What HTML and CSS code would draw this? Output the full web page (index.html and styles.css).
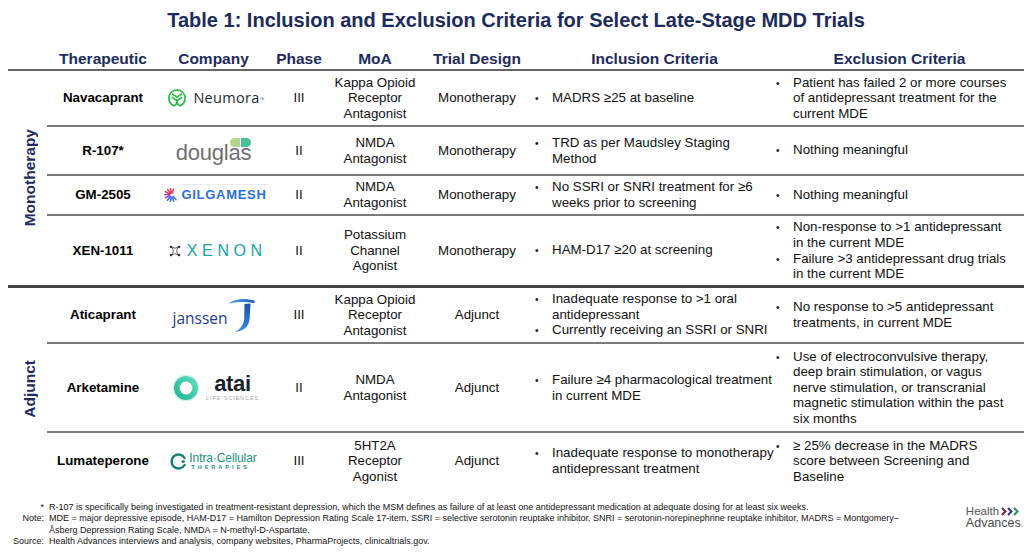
FILE: index.html
```html
<!DOCTYPE html>
<html lang="en">
<head>
<meta charset="utf-8">
<title>Table 1: Inclusion and Exclusion Criteria</title>
<link rel="stylesheet" href="styles.css">
</head>
<body>
<div class="page">
  <h1 class="title">Table 1: Inclusion and Exclusion Criteria for Select Late-Stage MDD Trials</h1>

  <div class="tbl">
    <div class="head">
      <div></div>
      <div>Therapeutic</div>
      <div>Company</div>
      <div>Phase</div>
      <div>MoA</div>
      <div>Trial Design</div>
      <div>Inclusion Criteria</div>
      <div>Exclusion Criteria</div>
    </div>

    <section class="group mono">
      <div class="side"><span>Monotherapy</span></div>
      <div class="rows">
        <div class="row h56 line">
          <div class="name">Navacaprant</div>
          <div class="co">
            <span class="neumora">
              <svg class="neu-icon" width="18" height="18" viewBox="0 0 20 20" aria-hidden="true">
                <path d="M6.5 18.5 C2.5 17 1 13.5 1 10 C1 5 5 1 10 1 C15 1 19 5 19 10 C19 13.5 17.5 17 13.5 18.5" fill="none" stroke="#33b84b" stroke-width="1.9" stroke-linecap="round"/>
                <path d="M5 5.5 L10 9 L15 5.5" fill="none" stroke="#33b84b" stroke-width="1.9" stroke-linecap="round" stroke-linejoin="round"/>
                <path d="M5 9.5 L10 13 L15 9.5" fill="none" stroke="#33b84b" stroke-width="1.9" stroke-linecap="round" stroke-linejoin="round"/>
                <path d="M6.5 18.5 C8.5 18 10 16 10 13 C10 16 11.5 18 13.5 18.5" fill="none" stroke="#33b84b" stroke-width="1.9" stroke-linecap="round"/>
              </svg>
              <span class="neu-text">Neumora</span><span class="tm">™</span>
            </span>
          </div>
          <div>III</div>
          <div>Kappa Opioid<br>Receptor<br>Antagonist</div>
          <div>Monotherapy</div>
          <ul class="crit"><li><span>MADRS ≥25 at baseline</span></li></ul>
          <ul class="crit"><li><span>Patient has failed 2 or more courses<br>of antidepressant treatment for the<br>current MDE</span></li></ul>
        </div>

        <div class="row h49 line">
          <div class="name">R-107*</div>
          <div class="co">
            <span class="douglas">
              <span class="pill"><span class="pill-l"></span><span class="pill-r"></span></span>
              <span class="dg-text">douglas</span>
            </span>
          </div>
          <div>II</div>
          <div>NMDA<br>Antagonist</div>
          <div>Monotherapy</div>
          <ul class="crit"><li><span>TRD as per Maudsley Staging<br>Method</span></li></ul>
          <ul class="crit"><li><span>Nothing meaningful</span></li></ul>
        </div>

        <div class="row h40 line">
          <div class="name">GM-2505</div>
          <div class="co">
            <span class="gilgamesh">
              <svg width="14" height="14" viewBox="0 0 14 14" aria-hidden="true">
                <g stroke-width="1.5" stroke-linecap="round">
                  <line x1="8" y1="7" x2="6.5" y2="0.8" stroke="#e0344b"/>
                  <line x1="8" y1="7" x2="3.6" y2="1.6" stroke="#e0344b"/>
                  <line x1="8" y1="7" x2="1.4" y2="3.6" stroke="#d23a6a"/>
                  <line x1="8" y1="7" x2="0.8" y2="6.6" stroke="#b0409a"/>
                  <line x1="8" y1="7" x2="1.4" y2="9.8" stroke="#8a46c8"/>
                  <line x1="8" y1="7" x2="3.4" y2="12.3" stroke="#6a4fde"/>
                  <line x1="8" y1="7" x2="6.4" y2="13.3" stroke="#4a62e2"/>
                  <line x1="8" y1="7" x2="9.6" y2="13.2" stroke="#2f74e0"/>
                  <line x1="8" y1="7" x2="12" y2="11.6" stroke="#2f7fe0"/>
                  <line x1="8" y1="7" x2="9.4" y2="0.9" stroke="#e8445a"/>
                </g>
                <circle cx="8" cy="7" r="1.6" fill="#fff"/>
              </svg>
              <span class="gil-text">GILGAMESH</span>
            </span>
          </div>
          <div>II</div>
          <div>NMDA<br>Antagonist</div>
          <div>Monotherapy</div>
          <ul class="crit"><li><span>No SSRI or SNRI treatment for ≥6<br>weeks prior to screening</span></li></ul>
          <ul class="crit"><li><span>Nothing meaningful</span></li></ul>
        </div>

        <div class="row h69">
          <div class="name">XEN-1011</div>
          <div class="co">
            <span class="xenon">
              <svg width="12" height="12" viewBox="0 0 12 12" aria-hidden="true">
                <path d="M2.5 2 Q6 4.5 9.5 2 M2.5 10 Q6 7.5 9.5 10 M3.5 2.5 Q5 6 3.5 9.5 M8.5 2.5 Q7 6 8.5 9.5" fill="none" stroke="#555" stroke-width="0.9"/>
                <circle cx="2" cy="2" r="1.3" fill="#333"/>
                <circle cx="10" cy="2" r="1.3" fill="#333"/>
                <circle cx="2" cy="10" r="1.3" fill="#333"/>
                <circle cx="10" cy="10" r="1.3" fill="#333"/>
              </svg>
              <span class="xe-text">XENON</span>
            </span>
          </div>
          <div>II</div>
          <div>Potassium<br>Channel<br>Agonist</div>
          <div>Monotherapy</div>
          <ul class="crit"><li><span>HAM-D17 ≥20 at screening</span></li></ul>
          <ul class="crit">
            <li><span>Non-response to &gt;1 antidepressant<br>in the current MDE</span></li>
            <li><span>Failure &gt;3 antidepressant drug trials<br>in the current MDE</span></li>
          </ul>
        </div>
      </div>
    </section>

    <section class="group adj">
      <div class="side"><span>Adjunct</span></div>
      <div class="rows">
        <div class="row h56 line">
          <div class="name">Aticaprant</div>
          <div class="co">
            <span class="janssen">
              <span class="jn-text">janssen</span>
              <svg width="27" height="34" viewBox="0 0 27 34" aria-hidden="true">
                <defs>
                  <linearGradient id="jg1" x1="0" y1="0" x2="1" y2="0">
                    <stop offset="0" stop-color="#5aa6e6"/>
                    <stop offset="1" stop-color="#1b5fb8"/>
                  </linearGradient>
                  <linearGradient id="jg2" x1="0" y1="0" x2="0" y2="1">
                    <stop offset="0" stop-color="#1a4ea6"/>
                    <stop offset="1" stop-color="#3a8fe0"/>
                  </linearGradient>
                </defs>
                <path d="M1 5 C8 0.5 17 0 26.5 2.6 L26.5 5.2 C18 3.2 9 3.6 1 5.6 Z" fill="url(#jg1)"/>
                <path d="M16.5 6 L22.5 5.6 L21.6 21 C21 29 15 33.5 7 33.8 C12.5 31 16 26.5 16.2 20 Z" fill="url(#jg2)"/>
              </svg>
            </span>
          </div>
          <div>III</div>
          <div>Kappa Opioid<br>Receptor<br>Antagonist</div>
          <div>Adjunct</div>
          <ul class="crit">
            <li><span>Inadequate response to &gt;1 oral<br>antidepressant</span></li>
            <li><span>Currently receiving an SSRI or SNRI</span></li>
          </ul>
          <ul class="crit"><li><span>No response to &gt;5 antidepressant<br>treatments, in current MDE</span></li></ul>
        </div>

        <div class="row h89 line">
          <div class="name">Arketamine</div>
          <div class="co">
            <span class="atai">
              <svg width="28" height="28" viewBox="0 0 28 28" aria-hidden="true">
                <defs>
                  <linearGradient id="ag" x1="0" y1="1" x2="1" y2="0">
                    <stop offset="0" stop-color="#22b894"/>
                    <stop offset="1" stop-color="#5fd8bf"/>
                  </linearGradient>
                </defs>
                <circle cx="14" cy="14" r="12.6" fill="none" stroke="#bfeee2" stroke-width="1.4" opacity="0.7"/>
                <circle cx="14" cy="14" r="9.2" fill="none" stroke="url(#ag)" stroke-width="5.6"/>
              </svg>
              <span class="atai-words">
                <span class="atai-text">atai</span>
                <span class="atai-sub">LIFE SCIENCES</span>
              </span>
            </span>
          </div>
          <div>II</div>
          <div>NMDA<br>Antagonist</div>
          <div>Adjunct</div>
          <ul class="crit"><li><span>Failure ≥4 pharmacological treatment<br>in current MDE</span></li></ul>
          <ul class="crit"><li><span>Use of electroconvulsive therapy,<br>deep brain stimulation, or vagus<br>nerve stimulation, or transcranial<br>magnetic stimulation within the past<br>six months</span></li></ul>
        </div>

        <div class="row h56">
          <div class="name">Lumateperone</div>
          <div class="co">
            <span class="intra">
              <svg width="17" height="17" viewBox="0 0 17 17" aria-hidden="true">
                <path d="M14.6 5 A7 7 0 1 0 14.6 12" fill="none" stroke="#13806f" stroke-width="2.4" stroke-linecap="round"/>
                <circle cx="13.2" cy="8.5" r="1.6" fill="#13806f"/>
              </svg>
              <span class="intra-words">
                <span class="intra-text">Intra·Cellular</span>
                <span class="intra-sub">THERAPIES</span>
              </span>
            </span>
          </div>
          <div>III</div>
          <div>5HT2A<br>Receptor<br>Agonist</div>
          <div>Adjunct</div>
          <ul class="crit"><li><span>Inadequate response to monotherapy<br>antidepressant treatment</span></li></ul>
          <ul class="crit"><li><span>≥ 25% decrease in the MADRS<br>score between Screening and<br>Baseline</span></li></ul>
        </div>
      </div>
    </section>
  </div>

  <footer class="foot">
    <div class="notes">
      <span class="lbl">*</span>
      <span>R-107 is specifically being investigated in treatment-resistant depression, which the MSM defines as failure of at least one antidepressant medication at adequate dosing for at least six weeks.</span>
      <span class="lbl">Note:</span>
      <span>MDE = major depressive episode, HAM-D17 = Hamilton Depression Rating Scale 17-item, SSRI = selective serotonin reuptake inhibitor, SNRI = serotonin-norepinephrine reuptake inhibitor, MADRS = Montgomery–<br>Åsberg Depression Rating Scale, NMDA = N-methyl-D-Aspartate.</span>
      <span class="lbl">Source:</span>
      <span>Health Advances interviews and analysis, company websites, PharmaProjects, clinicaltrials.gov.</span>
    </div>
    <div class="ha">
      <span class="ha-top">Health<svg width="18" height="9" viewBox="0 0 18 9" aria-hidden="true">
          <path d="M1 1 L4.5 4.5 L1 8" fill="none" stroke="#8c1c3e" stroke-width="2"/>
          <path d="M7 1 L10.5 4.5 L7 8" fill="none" stroke="#1f3b8a" stroke-width="2"/>
          <path d="M13 1 L16.5 4.5 L13 8" fill="none" stroke="#2f8f5a" stroke-width="2"/>
        </svg></span>
      <span class="ha-bot">Advances<span class="ha-dot">.</span></span>
    </div>
  </footer>
</div>
</body>
</html>
```

FILE: styles.css
```css
* { box-sizing: border-box; }

html, body {
  margin: 0;
  padding: 0;
  background: #ffffff;
}

body {
  font-family: "Liberation Sans", Arial, sans-serif;
  color: #111;
}

.page {
  width: 1032px;
  height: 554px;
  padding: 0 8px;
  overflow: hidden;
}

.title {
  margin: 8px 0 0;
  font-size: 20px;
  line-height: 24px;
  font-weight: bold;
  text-align: center;
  color: #1d2b5c;
}

/* ---------- table ---------- */
.head,
.row {
  display: grid;
  grid-template-columns: 112px 109px 62px 90px 114px 241px 1fr;
}

.head {
  grid-template-columns: 39px 112px 109px 62px 90px 114px 241px 1fr;
  padding-top: 18px;
  padding-bottom: 1px;
  border-bottom: 2px solid #666;
  font-size: 15.5px;
  line-height: 18px;
  font-weight: bold;
  color: #1d2b5c;
  text-align: center;
}

.group {
  display: grid;
  grid-template-columns: 39px 1fr;
}

.group.mono {
  border-bottom: 3px solid #444;
}

.side {
  display: flex;
  align-items: center;
  justify-content: center;
  padding-left: 4px;
}

.side span {
  writing-mode: vertical-rl;
  transform: rotate(180deg);
  font-size: 15.5px;
  font-weight: bold;
  color: #1d2b5c;
  line-height: 18px;
}

.row {
  align-items: center;
  font-size: 13.33px;
  line-height: 15.6px;
  text-align: center;
  color: #111;
}

.row.line { border-bottom: 2px solid #7a7a7a; }

.h40 { height: 40px; }
.h49 { height: 49px; }
.h56 { height: 56px; }
.h69 { height: 69px; }
.h89 { height: 89px; }

.name { font-weight: bold; color: #000; }

.co {
  display: flex;
  justify-content: center;
  align-items: center;
}

.crit {
  list-style: none;
  margin: 0;
  padding: 0 0 0 1px;
  text-align: left;
  white-space: nowrap;
}

.crit li {
  display: flex;
  align-items: baseline;
}

.crit li::before {
  content: "•";
  flex: none;
  width: 17px;
  font-size: 10px;
}

/* ---------- logos ---------- */
.neumora {
  display: inline-flex;
  align-items: center;
  margin-left: 6px;
}
.neu-icon { flex: none; }
.neu-text {
  margin-left: 7px;
  font-family: "Open Sans", sans-serif;
  font-size: 14.5px;
  line-height: 16px;
  letter-spacing: 0.3px;
  color: #1b2a36;
}
.tm {
  font-size: 5px;
  align-self: flex-start;
  margin-top: 4px;
  color: #555;
}

.douglas {
  display: inline-flex;
  flex-direction: column;
  align-items: flex-end;
  margin-top: 2px;
}
.pill {
  display: flex;
  gap: 1px;
}
.pill-l, .pill-r {
  width: 10px;
  height: 9px;
}
.pill-l { background: #b3d58c; border-radius: 5px 0 0 5px; }
.pill-r { background: #47c29b; border-radius: 0 5px 5px 0; }
.dg-text {
  margin-top: -6px;
  font-size: 22px;
  line-height: 24px;
  letter-spacing: -0.2px;
  color: #6e6f71;
}

.gilgamesh {
  display: inline-flex;
  align-items: center;
  gap: 3px;
  margin-left: 4px;
}
.gil-text {
  border-top: 1px solid #e9e9ee;
  padding-top: 3px;
  margin-top: -5px;
  font-size: 13px;
  line-height: 14px;
  font-weight: bold;
  letter-spacing: 0.7px;
  color: #2b6fe0;
}

.xenon {
  display: inline-flex;
  align-items: center;
  gap: 6px;
  margin-left: 4px;
}
.xe-text {
  font-size: 16px;
  line-height: 18px;
  letter-spacing: 4.6px;
  margin-right: -4.6px;
  color: #14a3a8;
}

.janssen {
  display: inline-flex;
  align-items: center;
}
.jn-text {
  font-family: "Open Sans", sans-serif;
  font-size: 15.5px;
  line-height: 18px;
  color: #1c3b8e;
  margin-top: 6px;
}

.atai {
  display: inline-flex;
  align-items: center;
  gap: 6px;
  margin-left: 4px;
}
.atai-words {
  display: flex;
  flex-direction: column;
}
.atai-text {
  font-size: 22px;
  line-height: 20px;
  font-weight: bold;
  letter-spacing: -0.3px;
  color: #1c1f2b;
}
.atai-sub {
  font-size: 5px;
  line-height: 7px;
  letter-spacing: 1.2px;
  color: #9aa4a8;
  margin-top: 1px;
}

.intra {
  display: inline-flex;
  align-items: center;
  gap: 2px;
}
.intra-words {
  display: flex;
  flex-direction: column;
  align-items: flex-start;
}
.intra-text {
  font-size: 12px;
  line-height: 12px;
  letter-spacing: -0.1px;
  color: #18917c;
}
.intra-sub {
  font-size: 5.5px;
  line-height: 6px;
  font-weight: bold;
  letter-spacing: 3px;
  color: #18917c;
  margin-left: 2px;
}

/* ---------- footer ---------- */
.foot {
  display: flex;
  justify-content: space-between;
  align-items: flex-start;
  padding-top: 13px;
}

.notes {
  display: grid;
  grid-template-columns: 36px auto;
  column-gap: 5px;
  font-size: 9px;
  line-height: 11.4px;
  color: #111;
}

.lbl { text-align: right; }

.ha {
  display: flex;
  flex-direction: column;
  margin-top: 3px;
  margin-right: 1px;
  color: #555;
}
.ha-top {
  display: flex;
  align-items: center;
  gap: 2px;
  font-size: 11.5px;
  line-height: 12px;
}
.ha-bot {
  font-size: 12.5px;
  line-height: 13px;
  color: #4a4a4a;
}
.ha-dot { font-size: 8px; }
```
